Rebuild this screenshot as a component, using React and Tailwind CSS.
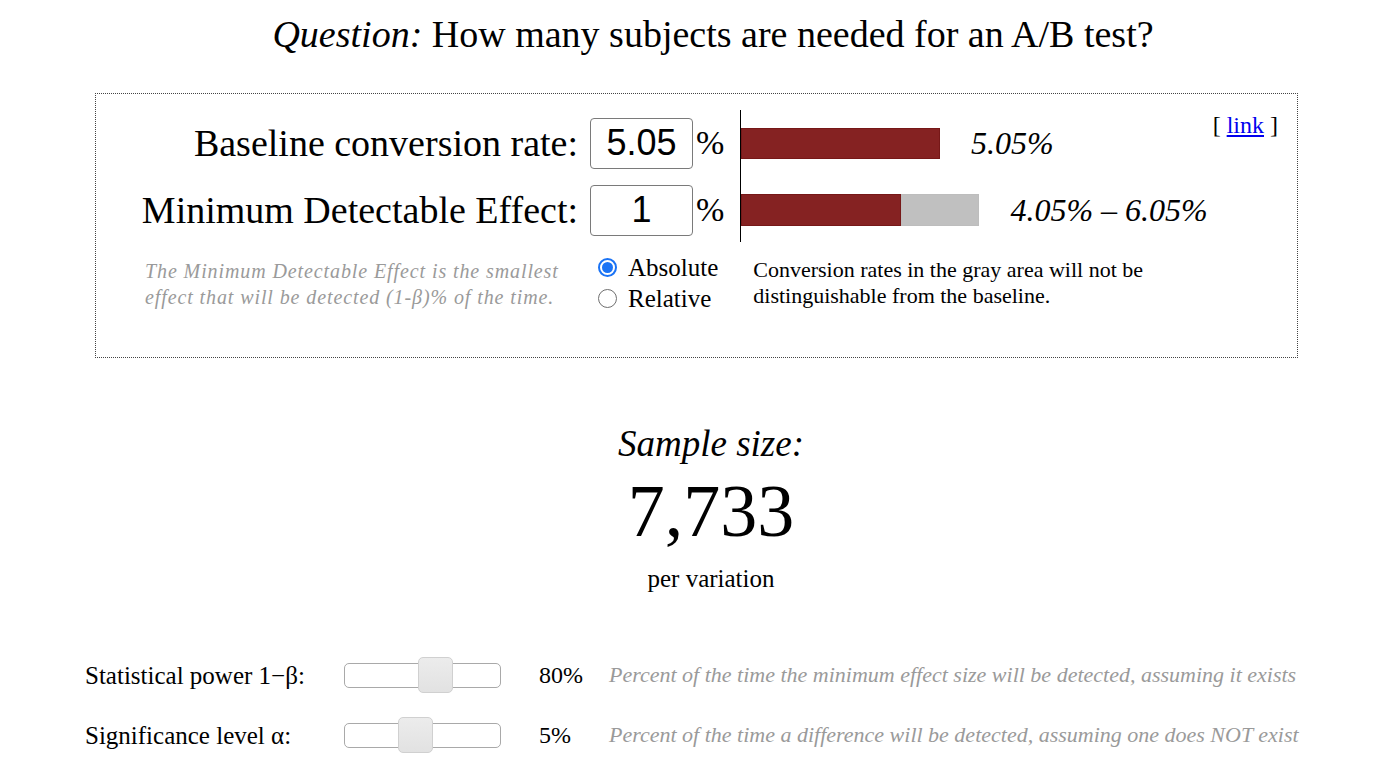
import React from "react";

const serif = "font-['Liberation_Serif','Times_New_Roman',serif]";

function Bar({ value, low, high }) {
  const scale = 199 / 5.05;
  if (low === undefined) {
    return (
      <div className="flex items-center">
        <div
          className="h-[31px] bg-[#852222] border border-[#761818]"
          style={{ width: value * scale }}
        />
        <span className="ml-[31px] text-[32px] italic leading-none">5.05%</span>
      </div>
    );
  }
  return (
    <div className="flex items-center">
      <div
        className="h-[32px] bg-[#852222] border border-[#761818]"
        style={{ width: low * scale }}
      />
      <div
        className="h-[32px] bg-[#c0c0c0] border border-[#bdbdbd]"
        style={{ width: (high - low) * scale }}
      />
      <span className="ml-[31px] text-[32px] italic leading-none">4.05% – 6.05%</span>
    </div>
  );
}

function Radio({ checked, label }) {
  return (
    <div className="flex items-center h-[31px]">
      {checked ? (
        <span className="w-[19px] h-[19px] rounded-full border-[2px] border-[#1a73f5] bg-white flex items-center justify-center">
          <span className="w-[11px] h-[11px] rounded-full bg-[#1a73f5]" />
        </span>
      ) : (
        <span className="w-[19px] h-[19px] rounded-full border border-[#6f6f6f] bg-white" />
      )}
      <span className="ml-[11px] text-[25px] leading-none">{label}</span>
    </div>
  );
}

function Slider({ left }) {
  return (
    <div className="relative w-[157px] h-[25px] rounded-[5px] border border-[#a9a9a9] bg-white">
      <div
        className={`absolute top-[-7px] w-[35px] h-[36px] rounded-[5px] border border-[#d0d0d0] bg-gradient-to-b from-[#ececec] to-[#e2e2e2] ${left}`}
      />
    </div>
  );
}

export default function App() {
  return (
    <div className={`w-[1400px] h-[772px] bg-white text-black overflow-hidden ${serif}`}>
      <div className="pt-[13px] pl-[26px] text-center text-[38px] leading-[42px]">
        <span className="italic">Question:</span> How many subjects are needed for an A/B test?
      </div>

      <div className="mt-[38px] ml-[95px] w-[1203px] h-[265px] border border-dotted border-[#444] flex flex-col">
        <div className="flex items-start pt-[16px]">
          <div className="pt-[8px] flex flex-col gap-[17px]">
            <div className="flex items-center h-[50px]">
              <div className="w-[482px] text-right text-[38px] leading-none">Baseline conversion rate:</div>
              <div className="ml-[12px] w-[103px] h-[51px] border border-[#7a7a7a] rounded-[4px] flex items-center justify-center font-['Liberation_Sans',Arial,sans-serif] text-[36px] leading-none">
                5.05
              </div>
              <div className="ml-[3px] w-[27px] text-[34px] leading-none">%</div>
            </div>
            <div className="flex items-center h-[50px]">
              <div className="w-[482px] text-right text-[38px] leading-none">Minimum Detectable Effect:</div>
              <div className="ml-[12px] w-[103px] h-[51px] border border-[#7a7a7a] rounded-[4px] flex items-center justify-center font-['Liberation_Sans',Arial,sans-serif] text-[36px] leading-none">
                1
              </div>
              <div className="ml-[3px] w-[27px] text-[34px] leading-none">%</div>
            </div>
          </div>
          <div className="ml-[17px] border-l border-black pt-[8px] pb-[7px] flex flex-col gap-[17px]">
            <div className="h-[50px] flex items-center">
              <Bar value={5.05} />
            </div>
            <div className="h-[50px] flex items-center">
              <Bar low={4.05} high={6.05} />
            </div>
          </div>
          <div className="ml-auto mr-[19px] mt-[2px] text-[24px] leading-[26px]">
            [ <span className="text-[#0000ee] underline">link</span> ]
          </div>
        </div>

        <div className="flex items-start">
          <div className="ml-[49px] mt-[16px] w-[453px] text-[20px] leading-[26px] italic text-[#9a9a9a] tracking-[0.9px] whitespace-nowrap">
            The Minimum Detectable Effect is the smallest
            <br />
            effect that will be detected (1-β)% of the time.
          </div>
          <div className="mt-[10px] flex flex-col">
            <Radio checked label="Absolute" />
            <Radio label="Relative" />
          </div>
          <div className="ml-[35px] mt-[15px] text-[22px] leading-[26px] whitespace-nowrap">
            Conversion rates in the gray area will not be
            <br />
            distinguishable from the baseline.
          </div>
        </div>
      </div>

      <div className="pl-[22px] text-center">
        <div className="mt-[64px] text-[37px] leading-[44px] italic">Sample size:</div>
        <div className="mt-[5px] text-[74px] leading-[80px]">7,733</div>
        <div className="mt-[13px] text-[25px] leading-[30px]">per variation</div>
      </div>

      <div className="mt-[61px] pl-[85px] flex flex-col gap-[20px]">
        <div className="flex items-center h-[40px]">
          <div className="w-[259px] text-[25px] leading-none">Statistical power 1−β:</div>
          <Slider left="left-[73px]" />
          <div className="ml-[38px] w-[70px] text-[24px] leading-none">80%</div>
          <div className="text-[22px] italic text-[#9a9a9a] leading-none whitespace-nowrap">
            Percent of the time the minimum effect size will be detected, assuming it exists
          </div>
        </div>
        <div className="flex items-center h-[40px]">
          <div className="w-[259px] text-[25px] leading-none">Significance level α:</div>
          <Slider left="left-[53px]" />
          <div className="ml-[38px] w-[70px] text-[24px] leading-none">5%</div>
          <div className="text-[22px] italic text-[#9a9a9a] leading-none whitespace-nowrap">
            Percent of the time a difference will be detected, assuming one does NOT exist
          </div>
        </div>
      </div>
    </div>
  );
}
